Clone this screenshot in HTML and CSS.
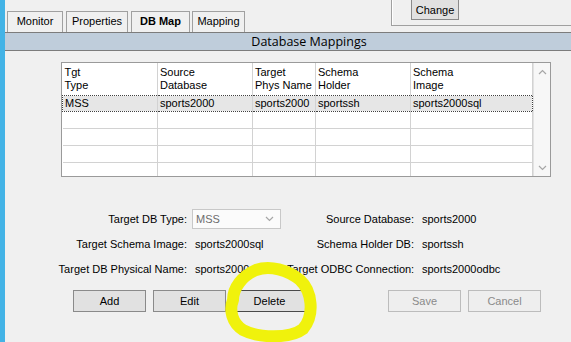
FILE: index.html
```html
<!DOCTYPE html>
<html>
  <head>
    <meta name="viewport" content="width=device-width, initial-scale=1" />
    <link rel="stylesheet" href="styles.css">
  </head>
  <body>
    <div class="window">
      <div class="edge"></div>
      <div class="main">
        <div class="top">
          <div class="tabs">
            <div class="tab tab-monitor">Monitor</div>
            <div class="tab tab-properties">Properties</div>
            <div class="tab tab-dbmap active">DB Map</div>
            <div class="tab tab-mapping">Mapping</div>
          </div>
          <div class="side-panel">
            <button class="btn change">Change</button>
          </div>
        </div>

        <div class="title-bar">Database Mappings</div>

        <div class="content">
          <div class="grid">
            <table class="mappings">
              <colgroup>
                <col style="width: 95px" />
                <col style="width: 95px" />
                <col style="width: 63px" />
                <col style="width: 95px" />
                <col style="width: 122px" />
              </colgroup>
              <tr class="head">
                <th>Tgt<br />Type</th>
                <th>Source<br />Database</th>
                <th>Target<br />Phys Name</th>
                <th>Schema<br />Holder</th>
                <th>Schema<br />Image</th>
              </tr>
              <tr class="selected">
                <td>MSS</td>
                <td>sports2000</td>
                <td>sports2000</td>
                <td>sportssh</td>
                <td>sports2000sql</td>
              </tr>
              <tr><td></td><td></td><td></td><td></td><td></td></tr>
              <tr><td></td><td></td><td></td><td></td><td></td></tr>
              <tr><td></td><td></td><td></td><td></td><td></td></tr>
              <tr class="last"><td></td><td></td><td></td><td></td><td></td></tr>
            </table>
            <div class="scrollbar">
              <svg width="9" height="6" viewBox="0 0 9 6"><path d="M1 5 L4.5 1.5 L8 5" fill="none" stroke="#a6a6a6" stroke-width="1.2" /></svg>
              <svg width="9" height="6" viewBox="0 0 9 6"><path d="M1 1 L4.5 4.5 L8 1" fill="none" stroke="#a6a6a6" stroke-width="1.2" /></svg>
            </div>
          </div>

          <div class="fields">
            <label>Target DB Type:</label>
            <div class="value">
              <div class="select">
                <span>MSS</span>
                <svg width="9" height="6" viewBox="0 0 9 6"><path d="M1 1 L4.5 4.5 L8 1" fill="none" stroke="#a6a6a6" stroke-width="1.2" /></svg>
              </div>
            </div>
            <label>Source Database:</label>
            <div class="value text">sports2000</div>

            <label>Target Schema Image:</label>
            <div class="value text">sports2000sql</div>
            <label>Schema Holder DB:</label>
            <div class="value text">sportssh</div>

            <label>Target DB Physical Name:</label>
            <div class="value text">sports2000</div>
            <label>Target ODBC Connection:</label>
            <div class="value text">sports2000odbc</div>
          </div>

          <div class="actions">
            <div class="group">
              <button class="btn">Add</button>
              <button class="btn">Edit</button>
              <button class="btn focused">Delete</button>
            </div>
            <div class="group">
              <button class="btn" disabled>Save</button>
              <button class="btn" disabled>Cancel</button>
            </div>
          </div>
        </div>
      </div>
    </div>

    <!-- highlighter mark drawn over the screenshot -->
    <svg class="scribble" width="571" height="342" viewBox="0 0 571 342">
      <path d="M233 300 C233 288, 242 276, 256 270 C270 265, 288 270, 300 280 C312 291, 315 315, 303 329 C290 339, 258 338, 243 330 C232 323, 229 310, 233 300" fill="none" stroke="#f0f20c" stroke-width="12" stroke-linecap="round" />
    </svg>
  </body>
</html>
```

FILE: styles.css
```css
* {
  box-sizing: border-box;
}

body {
  margin: 0;
  width: 571px;
  height: 342px;
  overflow: hidden;
  background-color: #f0f0f0;
  font-family: "Liberation Sans", Arial, sans-serif;
  font-size: 11px;
  color: #000;
  position: relative;
}

.window {
  display: flex;
  height: 342px;
}

.edge {
  width: 5px;
  background-color: #43b3e6;
}

.main {
  flex: 1;
  overflow: hidden;
}

/* tabs row */
.top {
  display: flex;
  height: 32px;
}

.tabs {
  display: flex;
  align-items: flex-end;
  gap: 3px;
  margin-left: 2px;
}

.tab {
  height: 21px;
  line-height: 19px;
  text-align: center;
  white-space: nowrap;
  border: 1px solid #a0a0a0;
  border-bottom: none;
  background-color: #f0f0f0;
}

.tab-monitor {
  width: 56px;
}

.tab-properties {
  width: 62px;
}

.tab-dbmap {
  width: 59px;
}

.tab-mapping {
  width: 53px;
  margin-left: -1px;
}

.tab.active {
  font-weight: bold;
}

.side-panel {
  margin-left: auto;
  width: 180px;
  height: 26px;
  padding-left: 19px;
  border-left: 1px solid #a0a0a0;
  border-bottom: 1px solid #a0a0a0;
  box-shadow: inset 1px 0 #ffffff;
}

.btn {
  font-family: "Liberation Sans", Arial, sans-serif;
  font-size: 11px;
  color: #000;
  width: 73px;
  height: 22px;
  padding: 0;
  background-color: #e1e1e1;
  border: 1px solid #8a8a8a;
}

.btn.change {
  width: 48px;
  height: 24px;
  margin-top: -4px;
  padding-top: 3px;
}

.btn.focused {
  border-color: #4a4a4a;
}

.btn:disabled {
  background-color: #eeeeee;
  border-color: #bcbcbc;
  color: #8a8a8a;
}

.title-bar {
  width: 608px;
  height: 19px;
  line-height: 17px;
  text-align: center;
  font-family: "Open Sans", "Noto Sans", sans-serif;
  font-size: 12.5px;
  background-color: #bfcddb;
  border-top: 1px solid #7c7c7c;
  border-bottom: 1px solid #7c7c7c;
}

.content {
  padding-top: 11px;
}

/* mappings grid */
.grid {
  display: flex;
  margin-left: 56px;
  width: 490px;
  height: 115px;
  border: 1px solid #9a9a9a;
  background-color: #ffffff;
}

.mappings {
  width: 470px;
  table-layout: fixed;
  border-collapse: collapse;
  align-self: flex-start;
}

.mappings th,
.mappings td {
  padding: 0 2px;
  text-align: left;
  font-weight: normal;
  white-space: nowrap;
  overflow: hidden;
  border-right: 1px solid #d2d2d2;
  border-bottom: 1px solid #d2d2d2;
}

.mappings th {
  height: 32px;
  line-height: 13px;
  vertical-align: middle;
  padding-top: 1px;
  border-bottom: none;
}

.mappings td {
  height: 17px;
}

.mappings .selected td {
  height: 16px;
  background-color: #e6e6e6;
  border-top: 1px dotted #404040;
  border-bottom: 1px dotted #404040;
}

.mappings .selected td:first-child {
  border-left: 1px dotted #404040;
}

.mappings .selected td:last-child {
  border-right: 1px dotted #404040;
}

.mappings .last td {
  border-bottom: none;
  height: 14px;
}

.scrollbar {
  width: 18px;
  margin-left: auto;
  display: flex;
  flex-direction: column;
  justify-content: space-between;
  align-items: center;
  padding: 6px 0 5px;
  background-color: #f7f7f7;
  border-left: 1px solid #e2e2e2;
}

/* detail fields */
.fields {
  display: grid;
  grid-template-columns: 182px 100px 127px 1fr;
  grid-auto-rows: 20px;
  row-gap: 5px;
  margin-top: 32px;
}

.fields label {
  text-align: right;
  line-height: 20px;
  white-space: nowrap;
}

.value.text {
  padding-left: 8px;
  line-height: 20px;
  white-space: nowrap;
}

.select {
  display: flex;
  align-items: center;
  justify-content: space-between;
  width: 89px;
  height: 20px;
  margin-left: 5px;
  padding: 0 6px 0 3px;
  background-color: #fbfbfb;
  border: 1px solid #c8c8c8;
  color: #6d6d6d;
}

.actions {
  display: flex;
  justify-content: space-between;
  margin-top: 11px;
  padding-left: 68px;
  padding-right: 30px;
}

.group {
  display: flex;
  gap: 7px;
}

.scribble {
  position: absolute;
  top: 0;
  left: 0;
  pointer-events: none;
}
```
